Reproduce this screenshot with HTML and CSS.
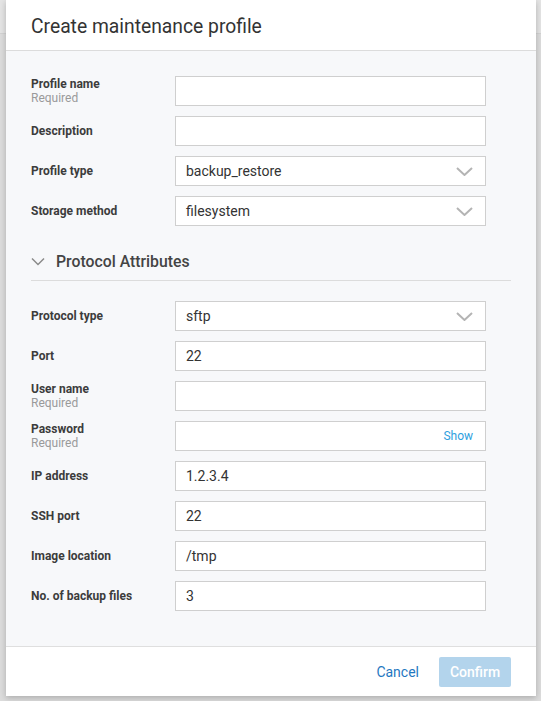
FILE: index.html
```html
<!DOCTYPE html>
<html>
<head>
<meta charset="utf-8">
<link rel="stylesheet" href="styles.css">
</head>
<body>
<div class="backdrop">
  <div class="backdrop-bar"></div>
</div>
<div class="dialog">
  <div class="dlg-header">
    <h1 class="dlg-title">Create maintenance profile</h1>
  </div>
  <div class="dlg-body">
    <div class="rows">
      <div class="row">
        <div class="label"><span class="lbl">Profile name</span><span class="req">Required</span></div>
        <div class="field"></div>
      </div>
      <div class="row">
        <div class="label"><span class="lbl">Description</span></div>
        <div class="field"></div>
      </div>
      <div class="row">
        <div class="label"><span class="lbl">Profile type</span></div>
        <div class="field select"><span class="val">backup_restore</span><svg class="chev" width="17" height="9" viewBox="0 0 17 9"><path d="M1 1 L8.5 8 L16 1" fill="none" stroke="#b4b4b4" stroke-width="2"/></svg></div>
      </div>
      <div class="row">
        <div class="label"><span class="lbl">Storage method</span></div>
        <div class="field select"><span class="val">filesystem</span><svg class="chev" width="17" height="9" viewBox="0 0 17 9"><path d="M1 1 L8.5 8 L16 1" fill="none" stroke="#b4b4b4" stroke-width="2"/></svg></div>
      </div>
    </div>

    <div class="section">
      <svg class="sec-chev" width="14" height="9" viewBox="0 0 14 9"><path d="M1 1.5 L7 7.5 L13 1.5" fill="none" stroke="#8a8a8a" stroke-width="1.5"/></svg>
      <span class="sec-title">Protocol Attributes</span>
    </div>

    <div class="rows">
      <div class="row">
        <div class="label"><span class="lbl">Protocol type</span></div>
        <div class="field select"><span class="val">sftp</span><svg class="chev" width="17" height="9" viewBox="0 0 17 9"><path d="M1 1 L8.5 8 L16 1" fill="none" stroke="#b4b4b4" stroke-width="2"/></svg></div>
      </div>
      <div class="row">
        <div class="label"><span class="lbl">Port</span></div>
        <div class="field"><span class="val">22</span></div>
      </div>
      <div class="row">
        <div class="label"><span class="lbl">User name</span><span class="req">Required</span></div>
        <div class="field"></div>
      </div>
      <div class="row">
        <div class="label"><span class="lbl">Password</span><span class="req">Required</span></div>
        <div class="field pw"><span class="show">Show</span></div>
      </div>
      <div class="row">
        <div class="label"><span class="lbl">IP address</span></div>
        <div class="field"><span class="val">1.2.3.4</span></div>
      </div>
      <div class="row">
        <div class="label"><span class="lbl">SSH port</span></div>
        <div class="field"><span class="val">22</span></div>
      </div>
      <div class="row">
        <div class="label"><span class="lbl">Image location</span></div>
        <div class="field"><span class="val">/tmp</span></div>
      </div>
      <div class="row">
        <div class="label"><span class="lbl">No. of backup files</span></div>
        <div class="field"><span class="val">3</span></div>
      </div>
    </div>
  </div>
  <div class="dlg-footer">
    <span class="cancel">Cancel</span>
    <span class="confirm">Confirm</span>
  </div>
</div>
</body>
</html>
```

FILE: styles.css
```css
html, body {
  margin: 0;
  padding: 0;
}
body {
  width: 541px;
  height: 701px;
  background: #dcdcdc;
  font-family: Roboto, "Liberation Sans", sans-serif;
  position: relative;
  overflow: hidden;
}
.backdrop {
  height: 701px;
}
.backdrop-bar {
  height: 33px;
  background: #e4e4e4;
  border-bottom: 1px solid #d2d2d2;
}
.dialog {
  position: absolute;
  left: 6px;
  top: 0;
  width: 530px;
  height: 696px;
  display: flex;
  flex-direction: column;
  background: #fff;
  box-shadow: 0 2px 6px rgba(0, 0, 0, 0.22);
}
.dlg-header {
  height: 50px;
  border-bottom: 1px solid #dcdcdc;
  display: flex;
  align-items: center;
  padding: 0 25px;
  background: #fff;
}
.dlg-title {
  margin: 0;
  font-size: 19.3px;
  font-weight: 400;
  color: #333;
  position: relative;
  top: 1px;
}
.dlg-body {
  flex: 1;
  background: #f7f8fa;
  padding: 25px 25px 0 25px;
}
.rows {
  display: flex;
  flex-direction: column;
  gap: 10px;
}
.row {
  display: flex;
  align-items: center;
  height: 30px;
}
.label {
  width: 144px;
  display: flex;
  flex-direction: column;
  line-height: 14px;
}
.lbl {
  font-size: 12px;
  font-weight: 700;
  color: #3c3c3c;
}
.req {
  font-size: 12px;
  color: #9a9a9a;
}
.field {
  box-sizing: border-box;
  width: 311px;
  height: 30px;
  background: #fff;
  border: 1px solid #cfcfcf;
  display: flex;
  align-items: center;
  padding: 0 12px 0 10px;
}
.val {
  font-size: 14px;
  color: #333;
  flex: 1;
}
.chev {
  display: block;
}
.pw {
  justify-content: flex-end;
}
.show {
  font-size: 12px;
  color: #2ea0de;
}
.section {
  box-sizing: border-box;
  margin-top: 20px;
  height: 35px;
  padding-bottom: 3px;
  border-bottom: 1px solid #dcdcdc;
  display: flex;
  align-items: center;
  margin-bottom: 20px;
}
.sec-chev {
  display: block;
  margin-right: 11px;
}
.sec-title {
  font-size: 15.8px;
  font-weight: 500;
  color: #444;
}
.dlg-footer {
  height: 49px;
  border-top: 1px solid #dfdfdf;
  display: flex;
  align-items: center;
  justify-content: flex-end;
  padding: 0 25px;
  background: #fff;
  gap: 20px;
}
.cancel {
  font-size: 14px;
  color: #1f78c1;
}
.confirm {
  font-size: 14px;
  font-weight: 500;
  color: #fff;
  background: #b3d4ec;
  height: 30px;
  width: 72px;
  display: flex;
  align-items: center;
  justify-content: center;
  border-radius: 2px;
}
```
